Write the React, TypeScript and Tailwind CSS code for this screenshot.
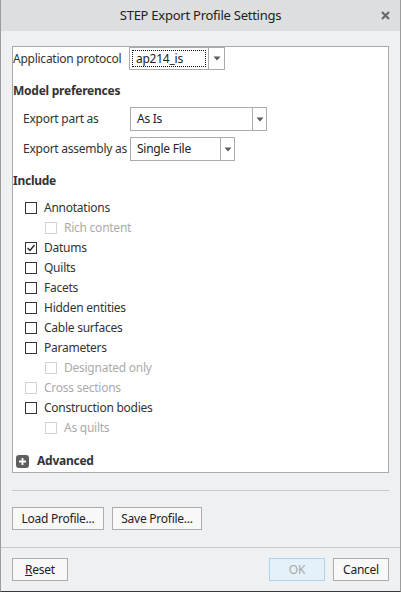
import React from "react";

const font = { fontFamily: '"Noto Sans", "Open Sans", Arial, sans-serif' };

function Arrow() {
  return (
    <svg width="8" height="5" viewBox="0 0 8 5" className="block">
      <path d="M0.5 0.5 L7.5 0.5 L4 4.5 Z" fill="#5a5a5a" />
    </svg>
  );
}

function Dropdown({ value, width, textWidth, focus }: { value: string; width: string; textWidth: string; focus?: boolean }) {
  return (
    <div className={`flex h-full ${width} border border-[#acacac] bg-white`}>
      <div className={`flex items-center ${textWidth} border-r border-[#acacac] p-[2px]`}>
        <div className={`flex h-full w-full items-center ${focus ? "border border-dotted border-[#111] pl-[3px]" : "pl-[4px]"}`}>
          <span className="text-[12px] text-[#222]">{value}</span>
        </div>
      </div>
      <div className="flex flex-1 items-center justify-center">
        <Arrow />
      </div>
    </div>
  );
}

function Check({ label, indent, checked, disabled }: { label: string; indent?: boolean; checked?: boolean; disabled?: boolean }) {
  return (
    <div className={`flex h-[20px] items-center ${indent ? "pl-[32px]" : "pl-[12px]"}`}>
      <div
        className={`flex h-[12px] w-[12px] items-center justify-center border bg-white ${
          disabled ? "border-[#d2d2d2]" : "border-[#333]"
        }`}
      >
        {checked && (
          <svg width="10" height="10" viewBox="0 0 10 10">
            <path d="M1.5 5 L4 7.5 L8.5 2" fill="none" stroke="#222" strokeWidth="1.4" />
          </svg>
        )}
      </div>
      <span className={`ml-[7px] whitespace-nowrap text-[12px] ${disabled ? "text-[#ababab]" : "text-[#333]"}`}>{label}</span>
    </div>
  );
}

function Btn({ label, className, children }: { label?: string; className: string; children?: React.ReactNode }) {
  return (
    <div className={`flex h-[23px] items-center justify-center whitespace-nowrap border text-[12px] ${className}`}>
      {children ?? label}
    </div>
  );
}

export default function App() {
  return (
    <div style={font} className="flex h-[592px] w-[401px] flex-col border-x border-b border-x-[#9c9c9c] border-b-[#3a3a3a] bg-[#eff0f1] tracking-[-0.25px]">
      <div className="relative flex h-[31px] items-center justify-center bg-[#dcdedf]">
        <span className="text-[13px] text-[#222]">STEP Export Profile Settings</span>
        <svg className="absolute right-[10px] top-[11px]" width="9" height="9" viewBox="0 0 9 9">
          <path d="M1 1 L8 8 M8 1 L1 8" stroke="#6a6a6a" strokeWidth="2.2" />
        </svg>
      </div>

      <div className="mx-[11px] mt-[15px] flex flex-col border border-[#ababab] bg-white pb-[1px]">
        <div className="flex h-[23px] items-center">
          <span className="w-[116px] whitespace-nowrap text-[12px] text-[#333]">Application protocol</span>
          <Dropdown value="ap214_is" width="w-[96px]" textWidth="w-[79px]" focus />
        </div>

        <div className="mt-[11px] flex h-[20px] items-center text-[12px] font-bold text-[#333]">Model preferences</div>

        <div className="mt-[6px] flex h-[24px] items-center pl-[10px]">
          <span className="w-[107px] whitespace-nowrap text-[12px] text-[#333]">Export part as</span>
          <Dropdown value="As Is" width="w-[137px]" textWidth="w-[122px]" />
        </div>
        <div className="mt-[6px] flex h-[24px] items-center pl-[10px]">
          <span className="w-[107px] whitespace-nowrap text-[12px] text-[#333]">Export assembly as</span>
          <Dropdown value="Single File" width="w-[105px]" textWidth="w-[90px]" />
        </div>

        <div className="mt-[10px] flex h-[20px] items-center text-[12px] font-bold text-[#333]">Include</div>

        <div className="mt-[7px] flex flex-col">
          <Check label="Annotations" />
          <Check label="Rich content" indent disabled />
          <Check label="Datums" checked />
          <Check label="Quilts" />
          <Check label="Facets" />
          <Check label="Hidden entities" />
          <Check label="Cable surfaces" />
          <Check label="Parameters" />
          <Check label="Designated only" indent disabled />
          <Check label="Cross sections" disabled />
          <Check label="Construction bodies" />
          <Check label="As quilts" indent disabled />
        </div>

        <div className="mt-[13px] flex h-[20px] items-center pl-[3px]">
          <div className="flex h-[13px] w-[13px] items-center justify-center rounded-[3px] bg-[#5f5f5f]">
            <svg width="9" height="9" viewBox="0 0 9 9">
              <path d="M4.5 1 V8 M1 4.5 H8" stroke="#fff" strokeWidth="1.8" />
            </svg>
          </div>
          <span className="ml-[8px] text-[12px] font-bold text-[#333]">Advanced</span>
        </div>
      </div>

      <div className="mx-[11px] mt-[17px] h-px bg-[#c8c8c8]" />

      <div className="mx-[11px] mt-[16px] flex gap-[8px]">
        <Btn label="Load Profile..." className="w-[92px] border-[#adadad] bg-[#f8f8f8] text-[#222]" />
        <Btn label="Save Profile..." className="w-[90px] border-[#adadad] bg-[#f8f8f8] text-[#222]" />
      </div>

      <div className="mt-[17px] h-px bg-[#c8c8c8]" />

      <div className="mx-[11px] mt-[10px] flex items-center">
        <Btn className="w-[56px] border-[#adadad] bg-[#f8f8f8] text-[#222]">
          <span>
            <span className="underline">R</span>eset
          </span>
        </Btn>
        <div className="flex-1" />
        <Btn label="OK" className="w-[56px] border-[#a9d5f2] bg-[#e4f1fb] text-[#a8a8a8]" />
        <Btn label="Cancel" className="ml-[8px] w-[56px] border-[#adadad] bg-[#f8f8f8] text-[#222]" />
      </div>
    </div>
  );
}
